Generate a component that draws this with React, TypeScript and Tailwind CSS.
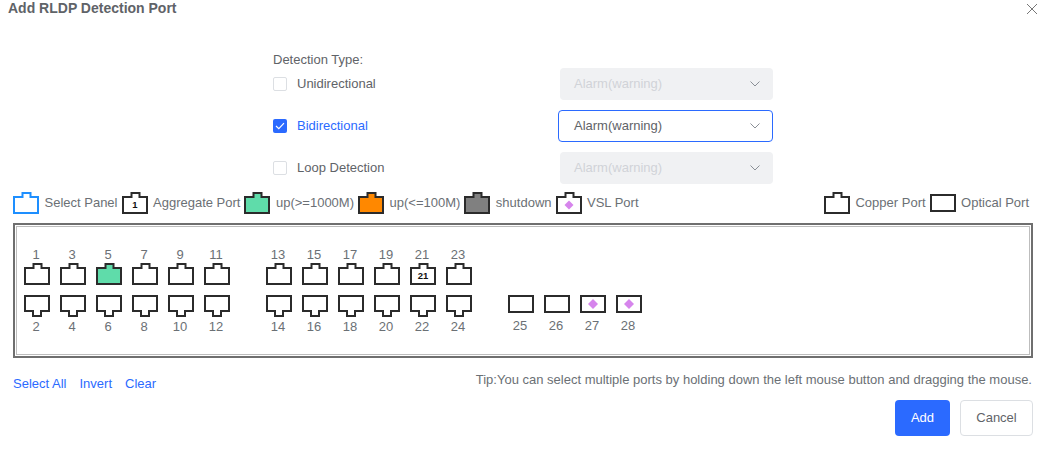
import React from 'react'

const FONT = "font-['Liberation_Sans',Arial,sans-serif]"

type PortProps = {
  fill?: string
  stroke?: string
  label?: string
  diamond?: boolean
}

function CopperUp({ fill = 'white', stroke = '#2b2b2b', label, diamond }: PortProps) {
  return (
    <svg width="26" height="22" viewBox="0 0 26 22" className="block shrink-0">
      <path d="M1 5H9.5V1H17.5V5H25V21H1Z" fill={fill} stroke={stroke} strokeWidth="2" />
      {label && (
        <text x="13" y="16" textAnchor="middle" fontSize="9.5" fontWeight="700" fill="#111" fontFamily="Liberation Sans, sans-serif">
          {label}
        </text>
      )}
      {diamond && <path d="M13 8.5L17.5 13L13 17.5L8.5 13Z" fill="#d685ec" />}
    </svg>
  )
}

function CopperDown() {
  return (
    <svg width="26" height="22" viewBox="0 0 26 22" className="block shrink-0">
      <path d="M1 1H25V16H17V21H9V16H1Z" fill="white" stroke="#2b2b2b" strokeWidth="2" />
    </svg>
  )
}

function Optical({ diamond }: { diamond?: boolean }) {
  return (
    <svg width="26" height="18" viewBox="0 0 26 18" className="block shrink-0">
      <rect x="1" y="1" width="24" height="16" fill="white" stroke="#2b2b2b" strokeWidth="2" />
      {diamond && <path d="M13 4L18 9L13 14L8 9Z" fill="#d685ec" />}
    </svg>
  )
}

function Chevron() {
  return (
    <svg width="12" height="8" viewBox="0 0 12 8" className="block shrink-0">
      <path d="M1.5 1.5L6 6L10.5 1.5" fill="none" stroke="#8a8f96" strokeWidth="1" />
    </svg>
  )
}

function Option({ label, checked }: { label: string; checked?: boolean }) {
  return (
    <div className="flex items-center h-[42px]">
      <div className="flex items-center w-[285px]">
        {checked ? (
          <div className="w-[14px] h-[14px] rounded-[2px] bg-[#2b6aff] flex items-center justify-center">
            <svg width="10" height="8" viewBox="0 0 10 8">
              <path d="M1 4L3.8 6.6L9 1.2" fill="none" stroke="white" strokeWidth="1.2" />
            </svg>
          </div>
        ) : (
          <div className="w-[14px] h-[14px] rounded-[2px] border border-[#dcdfe3] bg-white" />
        )}
        <span className={`ml-[10px] text-[13px] ${checked ? 'text-[#2b6aff]' : 'text-[#5f6368]'}`}>{label}</span>
      </div>
      {checked ? (
        <div className="w-[215px] h-[32px] rounded-[4px] border border-[#2b6aff] flex items-center justify-between pl-[15px] pr-[11px] text-[13px] text-[#5f6368]">
          Alarm(warning)
          <Chevron />
        </div>
      ) : (
        <div className="ml-[2px] w-[213px] h-[32px] rounded-[4px] bg-[#f0f1f3] flex items-center justify-between pl-[14px] pr-[12px] text-[13px] text-[#d0d3d8]">
          Alarm(warning)
          <Chevron />
        </div>
      )}
    </div>
  )
}

function Legend({ icon, text }: { icon: React.ReactNode; text: string }) {
  return (
    <div className="flex items-center">
      {icon}
      <span className="ml-[5.5px] text-[13px] text-[#6b7075]">{text}</span>
    </div>
  )
}

const groups = [
  [1, 3, 5, 7, 9, 11],
  [13, 15, 17, 19, 21, 23],
]

function PortColumn({ top }: { top: number }) {
  return (
    <div className="w-[36px] flex flex-col items-center">
      <span className="mr-[2px] text-[13px] leading-[18px] text-[#6b7075]">{top}</span>
      <div className="-mt-[1px]">
        <CopperUp fill={top === 5 ? '#5fdcaa' : 'white'} label={top === 21 ? '21' : undefined} />
      </div>
      <div className="mt-[10px]">
        <CopperDown />
      </div>
      <span className="mt-[1px] mr-[2px] text-[13px] leading-[18px] text-[#6b7075]">{top + 1}</span>
    </div>
  )
}

function OpticalColumn({ n, diamond }: { n: number; diamond?: boolean }) {
  return (
    <div className="w-[36px] flex flex-col items-center">
      <Optical diamond={diamond} />
      <span className="mt-[4px] mr-[2px] text-[13px] leading-[18px] text-[#6b7075]">{n}</span>
    </div>
  )
}

export default function App() {
  return (
    <div className={`w-[1048px] h-[449px] bg-white overflow-hidden ${FONT}`}>
      <div className="flex items-start justify-between h-[44px] pl-[8px] pr-[10px]">
        <span className="text-[14px] leading-[17px] font-bold text-[#5f6368]">Add RLDP Detection Port</span>
        <svg width="12" height="12" viewBox="0 0 12 12" className="mt-[3px]">
          <path d="M1 1L11 11M11 1L1 11" stroke="#777" strokeWidth="1" />
        </svg>
      </div>

      <div className="ml-[273px]">
        <div className="h-[19px] text-[13px] leading-[32px] text-[#5f6368]">Detection Type:</div>
        <Option label="Unidirectional" />
        <Option label="Bidirectional" checked />
        <Option label="Loop Detection" />
      </div>

      <div className="mt-[2px] flex items-center justify-between pl-[13px] pr-[19px] h-[24px]">
        <div className="flex items-center gap-[4px]">
          <Legend icon={<CopperUp stroke="#1e8fff" />} text="Select Panel" />
          <Legend icon={<CopperUp label="1" />} text="Aggregate Port" />
          <Legend icon={<CopperUp fill="#5fdcaa" />} text="up(>=1000M)" />
          <Legend icon={<CopperUp fill="#ff8800" />} text="up(<=100M)" />
          <Legend icon={<CopperUp fill="#808080" />} text="shutdown" />
          <Legend icon={<CopperUp diamond />} text="VSL Port" />
        </div>
        <div className="flex items-center gap-[4px]">
          <Legend icon={<CopperUp />} text="Copper Port" />
          <Legend icon={<Optical />} text="Optical Port" />
        </div>
      </div>

      <div className="mt-[8px] ml-[13px] w-[1020px] h-[135px] border-2 border-[#6f6f6f] p-[1px]">
        <div className="h-full border border-[#bdbdbd] pl-[2px] pt-[19px] flex">
          {groups.map(g => (
            <div key={g[0]} className="flex mr-[26px]">
              {g.map(n => (
                <PortColumn key={n} top={n} />
              ))}
            </div>
          ))}
          <div className="flex pt-[49px]">
            <OpticalColumn n={25} />
            <OpticalColumn n={26} />
            <OpticalColumn n={27} diamond />
            <OpticalColumn n={28} diamond />
          </div>
        </div>
      </div>

      <div className="mt-[12px] flex items-start justify-between pl-[13px] pr-[16px]">
        <div className="flex gap-[13px] mt-[4px] text-[13px] text-[#2b6aff]">
          <span>Select All</span>
          <span>Invert</span>
          <span>Clear</span>
        </div>
        <span className="text-[13px] text-[#6b7075]">Tip:You can select multiple ports by holding down the left mouse button and dragging the mouse.</span>
      </div>

      <div className="mt-[6px] flex justify-end gap-[10px] pr-[15px]">
        <div className="w-[55px] h-[36px] rounded-[4px] bg-[#2b6aff] text-white text-[13px] flex items-center justify-center">Add</div>
        <div className="w-[73px] h-[36px] rounded-[4px] border border-[#dcdfe3] text-[#5f6368] text-[13px] flex items-center justify-center">Cancel</div>
      </div>
    </div>
  )
}
